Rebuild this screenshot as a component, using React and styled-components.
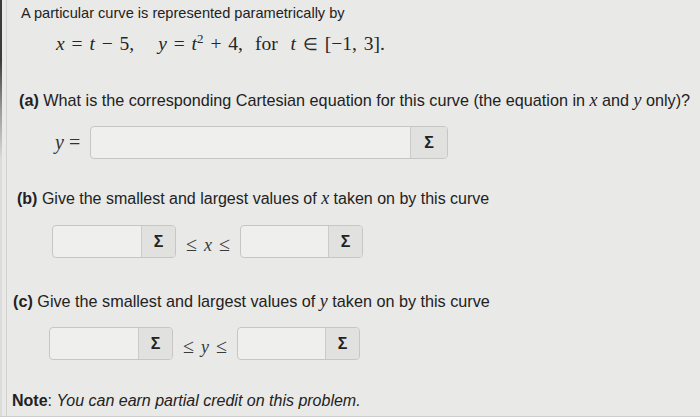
import React from 'react';
import styled, { createGlobalStyle } from 'styled-components';

const GlobalStyle = createGlobalStyle`
  html, body {
    margin: 0;
    padding: 0;
    background: #e9e9e7;
  }
  body {
    font-family: "Liberation Sans", Arial, sans-serif;
    color: #222;
  }
`;

const Page = styled.div`
  box-sizing: border-box;
  width: 700px;
  height: 417px;
  overflow: hidden;
  border-bottom: 1px solid #cdcdcb;
  padding-top: 3px;
  background:
    linear-gradient(to bottom, #3b3b3d 0, #3b3b3d 60px, #9a9a9a 110px, #dcdcda 160px) 0 0 / 2px 100% no-repeat,
    linear-gradient(#d2d2d0, #d2d2d0) 6px 0 / 1px 100% no-repeat,
    #e9e9e7;
`;

const Text = styled.p`
  margin: 0;
  padding-left: ${p => p.indent}px;
  margin-top: ${p => p.top || 0}px;
  font-size: ${p => p.size || 16}px;
  line-height: 20px;
  white-space: nowrap;
`;

const Part = styled.b`
  font-weight: bold;
`;

const MathLine = styled.div`
  margin-top: 9px;
  padding-left: 56px;
  font-family: "Liberation Serif", "Times New Roman", serif;
  font-size: 19.5px;
  line-height: 24px;
  white-space: nowrap;
  word-spacing: 2px;
  color: #262626;
`;

const Var = styled.i`
  font-family: "Liberation Serif", "Times New Roman", serif;
  font-style: italic;
  font-size: ${p => p.size || 'inherit'};
`;

const Sup = styled.sup`
  font-size: 13px;
  line-height: 0;
`;

const Elem = styled.span`
  font-size: 17px;
`;

const Gap = styled.span`
  display: inline-block;
  width: ${p => p.w}px;
`;

const Row = styled.div`
  display: flex;
  align-items: center;
  padding-left: ${p => p.indent}px;
  margin-top: ${p => p.top}px;
`;

const Label = styled.span`
  font-family: "Liberation Serif", "Times New Roman", serif;
  font-size: 20px;
  color: #333;
  width: ${p => p.w}px;
  white-space: nowrap;
`;

const Field = styled.div`
  display: flex;
  box-sizing: border-box;
  width: ${p => p.w}px;
  height: 33px;
  border: 1px solid #c6c6c4;
  border-radius: 4px;
  background: #efefed;
  overflow: hidden;
`;

const FieldInput = styled.div`
  flex: 1;
`;

const SigmaBtn = styled.div`
  width: ${p => p.w}px;
  display: flex;
  align-items: center;
  justify-content: center;
  background: #e1e1df;
  border-left: 1px solid #cbcbc9;
  font-family: "Liberation Sans", Arial, sans-serif;
  font-weight: bold;
  font-size: 16px;
  color: #222;
`;

const Between = styled.span`
  width: ${p => p.w}px;
  text-align: center;
  font-family: "Liberation Serif", "Times New Roman", serif;
  font-size: 20px;
  color: #3a3a3a;
  padding-top: 6px;
  white-space: nowrap;

  i { margin: 0 7px; font-size: 18px; }
`;

const Note = styled.p`
  margin: 31px 0 0;
  padding-left: 12px;
  font-size: 16px;
  line-height: 20px;
  white-space: nowrap;
  b { font-weight: bold; }
  i { font-style: italic; }
`;

function AnswerField({ w, sigma = 33 }) {
  return (
    <Field w={w}>
      <FieldInput />
      <SigmaBtn w={sigma}>Σ</SigmaBtn>
    </Field>
  );
}

function RangeRow({ indent, top, v }) {
  return (
    <Row indent={indent} top={top}>
      <AnswerField w={124} />
      <Between w={64}>
        ≤<Var>{v}</Var>≤
      </Between>
      <AnswerField w={123} />
    </Row>
  );
}

export default function App() {
  return (
    <>
      <GlobalStyle />
      <Page>
        <Text indent={21} size={14.6}>A particular curve is represented parametrically by</Text>
        <MathLine>
          <Var>x</Var> = <Var>t</Var> − 5,<Gap w={24} />
          <Var>y</Var> = <Var>t</Var>
          <Sup>2</Sup> + 4,<Gap w={12} />
          for <Gap w={6} /><Var>t</Var> <Elem>∈</Elem> [−1, 3].
        </MathLine>
        <Text indent={19} top={33} size={16.2}>
          <Part>(a)</Part> What is the corresponding Cartesian equation for this curve (the
          equation in <Var size="18px">x</Var> and <Var size="18px">y</Var> only)?
        </Text>
        <Row indent={55} top={16}>
          <Label w={35}><Var>y</Var> =</Label>
          <AnswerField w={358} sigma={36} />
        </Row>
        <Text indent={17} top={29}>
          <Part>(b)</Part> Give the smallest and largest values of <Var size="18px">x</Var> taken on by this curve
        </Text>
        <RangeRow indent={52} top={16} v="x" />
        <Text indent={13} top={33} size={16.2}>
          <Part>(c)</Part> Give the smallest and largest values of <Var size="18px">y</Var> taken on by this curve
        </Text>
        <RangeRow indent={49} top={16} v="y" />
        <Note>
          <b>Note</b>: <i>You can earn partial credit on this problem.</i>
        </Note>
      </Page>
    </>
  );
}
